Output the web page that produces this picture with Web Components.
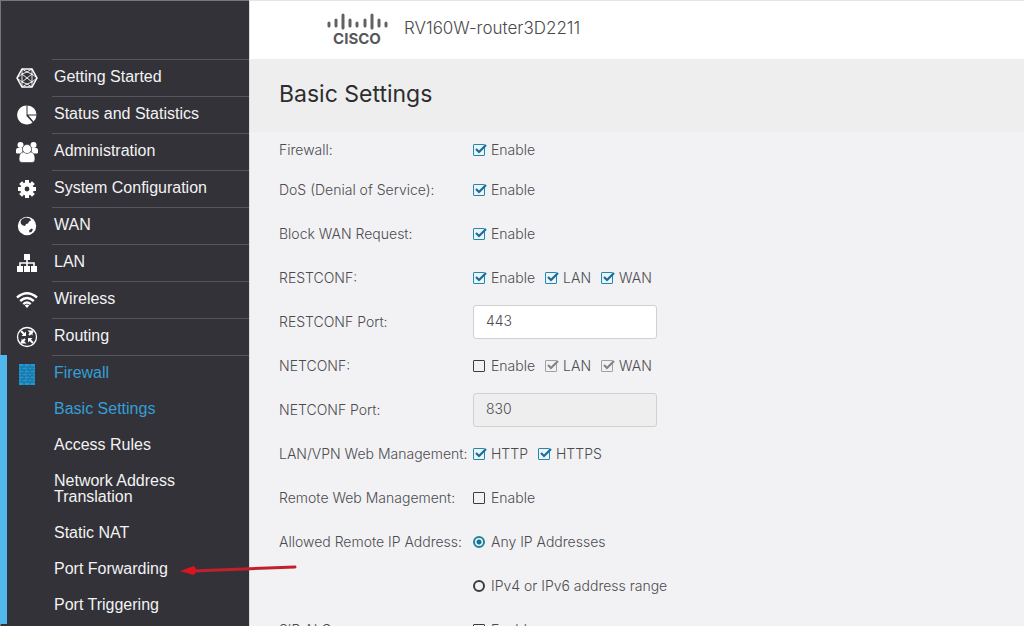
<!DOCTYPE html>
<html lang="en">
<head>
<meta charset="utf-8">
<meta name="viewport" content="width=device-width, initial-scale=1">
<title>RV160W-router3D2211 - Basic Settings</title>
<style>
  html, body { margin: 0; height: 100%; }
  body { font-family: Inter, "Liberation Sans", sans-serif; overflow: hidden; }
</style>
</head>
<body>
<router-app>
  <side-nav slot="nav">
    <nav-item icon="start">Getting Started</nav-item>
    <nav-item icon="pie">Status and Statistics</nav-item>
    <nav-item icon="users">Administration</nav-item>
    <nav-item icon="gear">System Configuration</nav-item>
    <nav-item icon="globe">WAN</nav-item>
    <nav-item icon="lan">LAN</nav-item>
    <nav-item icon="wifi">Wireless</nav-item>
    <nav-item icon="routing">Routing</nav-item>
    <nav-item icon="wall" active>Firewall
      <sub-item slot="sub" active>Basic Settings</sub-item>
      <sub-item slot="sub">Access Rules</sub-item>
      <sub-item slot="sub">Network Address Translation</sub-item>
      <sub-item slot="sub">Static NAT</sub-item>
      <sub-item slot="sub" pointed>Port Forwarding</sub-item>
      <sub-item slot="sub">Port Triggering</sub-item>
    </nav-item>
  </side-nav>
  <brand-bar slot="header">RV160W-router3D2211</brand-bar>
  <settings-page>
    <span slot="title">Basic Settings</span>
    <setting-row label="Firewall:" compact><check-field checked>Enable</check-field></setting-row>
    <setting-row label="DoS (Denial of Service):"><check-field checked>Enable</check-field></setting-row>
    <setting-row label="Block WAN Request:"><check-field checked>Enable</check-field></setting-row>
    <setting-row label="RESTCONF:"><check-field checked>Enable</check-field><check-field checked>LAN</check-field><check-field checked>WAN</check-field></setting-row>
    <port-row label="RESTCONF Port:" value="443"></port-row>
    <setting-row label="NETCONF:"><check-field>Enable</check-field><check-field checked disabled>LAN</check-field><check-field checked disabled>WAN</check-field></setting-row>
    <port-row label="NETCONF Port:" value="830" disabled></port-row>
    <setting-row label="LAN/VPN Web Management:"><check-field checked>HTTP</check-field><check-field checked>HTTPS</check-field></setting-row>
    <setting-row label="Remote Web Management:"><check-field>Enable</check-field></setting-row>
    <choice-row label="Allowed Remote IP Address:" options="Any IP Addresses|IPv4 or IPv6 address range"></choice-row>
    <setting-row label="SIP ALG:"><check-field>Enable</check-field></setting-row>
  </settings-page>
</router-app>

<script>
class Base extends HTMLElement {
  connectedCallback() {
    if (this.shadowRoot) return;
    this.attachShadow({ mode: 'open' }).innerHTML = this.render();
  }
}

const ROW = `
  :host { display: block; }
  .row { display: grid; grid-template-columns: 194px minmax(0, 1fr); min-height: 44px; align-items: center;
         font-size: 14px; line-height: 20px; font-weight: 300; color: #4c4c50; }
  .name { white-space: nowrap; }
`;

const ICONS = {
  start: `<g fill="none" stroke="#fff"><path stroke-width="1.5" d="M6 2h10l5 9-5 9H6l-5-9z"/><path stroke-width=".9" d="M6 2l5 3 5-3M1 11l5-4M21 11l-5-4M1 11l5 4M21 11l-5 4M6 20l5-3 5 3M6 20v-5M16 20v-5M6 2v5M16 2v5M6 7l5-2 5 2v8l-5 2-5-2zM6 7l10 8M16 7L6 15"/></g>`,
  pie: `<path fill="#fff" d="M10.500 1.500V12l6 6.500A9.500 9.500 0 1 1 10.500 1.500z"/><path fill="#fff" d="M11.500 1.500a9 9 0 0 1 9 9h-9zM12.500 11.500h8a9 9 0 0 1-3 6z"/>`,
  users: `<g fill="#fff"><circle cx="4.500" cy="4" r="3"/><circle cx="17.500" cy="4" r="3"/><path d="M0 12V9q0-2 2-2h4.500v5.500H1zM22 12V9q0-2-2-2h-4.500v5.500H21z"/><path stroke="#333238" stroke-width=".6" d="M3 18q0-6 4-7h8q4 1 4 7 0 3.500-3 3.500H6Q3 21.500 3 18z"/><circle cx="11" cy="8" r="4.500" stroke="#333238" stroke-width=".6"/></g>`,
  gear: `<g fill="none" stroke="#fff"><circle cx="11" cy="11" r="4.600" stroke-width="4.400"/><path stroke-width="4" d="M11 2v3M11 17v3M2 11h3M17 11h3M4.600 4.600l2 2M15.400 15.400l2 2M17.400 4.600l-2 2M6.600 15.400l-2 2"/></g>`,
  globe: `<circle cx="11" cy="11" r="9.200" fill="#fff"/><path fill="#333238" d="M6 4l4-1.500 4 1 1 2-2 1-1 2-2 .5-1 2-2-.5L5 9 4.500 6.500zM13 15.500l2.500-2 1.500 1-1.500 2.500-2 .5z"/>`,
  lan: `<path fill="#fff" d="M8 2h6v6H8zM1 14h6v6H1zM8 14h6v6H8zM15 14h6v6h-6z"/><path fill="none" stroke="#fff" stroke-width="1.600" d="M11 7v8M4 15v-4h14v4"/>`,
  wifi: `<g fill="none" stroke="#fff" stroke-width="2.400"><path d="M1 8.500q10-8.500 20 0M4.200 12q6.800-6 13.600 0M7.300 15.200q3.700-3.200 7.400 0"/></g><path fill="#fff" d="M8.800 16.500q2.200-1.800 4.400 0L11 19z"/>`,
  routing: `<circle cx="11" cy="11" r="9.500" fill="none" stroke="#fff" stroke-width="1.300"/><g stroke="#fff" stroke-width="1.900"><path d="M5 5l4 4M17 5l-4 4M5 17l4-4M17 17l-4-4"/></g><path fill="#fff" d="M10 10H5.500L10 5.500zM16.500 4.500v5l-5-5zM12 12h4.500L12 16.500zM5.500 17.500v-5l5 5z"/>`,
  wall: `<path fill="#1a9bd7" d="M3 1h16v21H3z"/><path fill="none" stroke="#28516b" stroke-width=".6" d="M3 4h16M3 7h16M3 10h16M3 13h16M3 16h16M3 19h16M8 1v3M14 1v3M6 4v3M12 4v3M16 4v3M8 7v3M14 7v3M6 10v3M12 10v3M16 10v3M8 13v3M14 13v3M6 16v3M12 16v3M16 16v3M8 19v3M14 19v3"/>`
};

customElements.define('router-app', class extends Base {
  render() {
    return `<style>
      :host { display: grid; grid-template-columns: 250px minmax(0, 1fr); height: 100vh; overflow: hidden; background: #f2f2f4; }
      aside { position: relative; z-index: 1; background: #333238; border-right: 1px solid #dcdcde; }
      main { min-width: 0; overflow: hidden; }
    </style>
    <aside><slot name="nav"></slot></aside>
    <main><slot name="header"></slot><slot></slot></main>`;
  }
});

customElements.define('side-nav', class extends Base {
  render() {
    return `<style>
      :host { display: block; box-sizing: border-box; min-height: 100%; padding-top: 58px; border-top: 1px solid #77767b;
              box-shadow: inset 1px 0 #77767b; font-family: "Liberation Sans", Arial, sans-serif; }
    </style><nav aria-label="Main"><slot></slot></nav>`;
  }
});

customElements.define('nav-item', class extends Base {
  render() {
    return `<style>
      :host { display: block; color: #f2f2f4; }
      :host([active]) { color: #359fd6; box-shadow: inset 7px 0 #50b8ec; }
      a { display: grid; grid-template-columns: 22px minmax(0, 1fr); column-gap: 14px; align-items: center;
          padding-left: 16px; color: inherit; text-decoration: none; font-size: 16px; line-height: 34px; }
      svg { display: block; width: 22px; height: 22px; }
      span { border-top: 1px solid #56555b; padding: 0 0 2px 2px; white-space: nowrap; }
    </style>
    <a href="#"><svg viewBox="0 0 22 22" aria-hidden="true">${ICONS[this.getAttribute('icon')]}</svg><span><slot></slot></span></a>
    <slot name="sub"></slot>`;
  }
});

customElements.define('sub-item', class extends Base {
  render() {
    const arrow = this.hasAttribute('pointed')
      ? `<svg viewBox="0 0 118 14" aria-hidden="true"><path d="M14 9L116 5" stroke="#c4202c" stroke-width="3" stroke-linecap="round"/><path d="M1 9l14-5q4 4 0 9z" fill="#dc1420"/></svg>` : '';
    return `<style>
      :host { display: block; position: relative; color: #f2f2f4; }
      :host([active]) { color: #359fd6; }
      a { display: block; padding: 9px 60px 11px 54px; color: inherit; text-decoration: none; font-size: 16px; line-height: 16px; }
      svg { position: absolute; left: 179px; top: 10px; width: 118px; height: 14px; }
    </style><a href="#"><slot></slot></a>${arrow}`;
  }
});

customElements.define('brand-bar', class extends Base {
  render() {
    const bars = [[3, 23, 26], [10, 20, 26], [17, 15, 28], [24, 20, 26], [31, 23, 26], [39, 20, 26], [46, 15, 28], [53, 20, 26], [60, 23, 26]]
      .map(([x, a, b]) => `M${x} ${a - 12}V${b - 12}`).join('');
    return `<style>
      :host { display: flex; align-items: flex-start; gap: 15px; box-sizing: border-box; height: 59px; padding: 11px 0 0 76px;
              background: #fff; border-top: 1px solid #e4e4e4; color: #4a4a4c; }
      svg { display: block; width: 63px; height: 36px; }
      .device { font-size: 17px; line-height: 32px; font-weight: 300; }
      text { font-size: 15px; font-weight: 700; }
    </style>
    <svg viewBox="0 0 63 36" role="img" aria-label="Cisco"><path d="${bars}" stroke="#626265" stroke-width="3" stroke-linecap="round"/>
      <text x="31" y="32" text-anchor="middle" fill="#58585b">CISCO</text></svg>
    <span class="device"><slot></slot></span>`;
  }
});

customElements.define('settings-page', class extends Base {
  render() {
    return `<style>
      :host { display: block; }
      h1 { margin: 0; padding: 20px 29px 23px; background: #eee; color: #2d2d30; font-size: 23px; line-height: 30px; font-weight: 400; }
      form { padding: 0 29px; }
    </style><h1><slot name="title"></slot></h1><form><slot></slot></form>`;
  }
});

customElements.define('setting-row', class extends Base {
  render() {
    return `<style>${ROW}
      :host([compact]) .row { min-height: 36px; }
      .fields { display: flex; gap: 10px; }
    </style>
    <div class="row" role="group" aria-labelledby="name"><span class="name" id="name">${this.getAttribute('label')}</span><div class="fields"><slot></slot></div></div>`;
  }
});

customElements.define('check-field', class extends Base {
  render() {
    const has = n => this.hasAttribute(n);
    return `<style>
      :host { display: block; }
      label { display: grid; grid-template-columns: 13px auto; column-gap: 5px; align-items: center; }
      .box { position: relative; height: 12px; }
      input { appearance: none; display: block; box-sizing: border-box; width: 12px; height: 12px; margin: 0; border: 1px solid #3c3c40; border-radius: 1px; }
      input:checked { border-color: #1e8ab4; }
      svg { display: none; position: absolute; left: 0; top: -1px; width: 15px; height: 13px; color: #176f9c; pointer-events: none; }
      input:checked + svg { display: block; }
      input:disabled { border-color: #a0a0a3; }
      input:disabled + svg { color: #858588; }
    </style>
    <label><span class="box"><input type="checkbox" ${has('checked') ? 'checked' : ''} ${has('disabled') ? 'disabled' : ''}><svg viewBox="0 0 15 13" aria-hidden="true"><path d="M3 6l3 3 7-7" fill="none" stroke="currentColor" stroke-width="2.200"/></svg></span><span><slot></slot></span></label>`;
  }
});

customElements.define('port-row', class extends Base {
  render() {
    return `<style>${ROW}
      input { display: block; box-sizing: border-box; width: 184px; height: 34px; padding: 0 12px 3px; border: 1px solid #d0d0d3; border-radius: 3px;
              background: #fff; color: #4c4c50; font: inherit; }
      input:disabled { background: #eee; }
    </style>
    <div class="row"><label class="name" for="port">${this.getAttribute('label')}</label><div><input id="port" type="text" inputmode="numeric" value="${this.getAttribute('value')}" ${this.hasAttribute('disabled') ? 'disabled' : ''}></div></div>`;
  }
});

customElements.define('choice-row', class extends Base {
  render() {
    const items = this.getAttribute('options').split('|').map((t, i) =>
      `<label><input type="radio" name="choice" ${i ? '' : 'checked'}><span>${t}</span></label>`).join('');
    return `<style>${ROW}
      .name, label { line-height: 44px; }
      .row { align-items: start; }
      label { display: grid; grid-template-columns: 13px auto; justify-content: start; column-gap: 5px; align-items: center; }
      input { appearance: none; box-sizing: border-box; width: 12px; height: 12px; margin: 0; border: 2px solid #3c3c40; border-radius: 50%; }
      input:checked { border-color: #1d8597; background: radial-gradient(circle, #176f9c 2px, transparent 3px); }
    </style>
    <div class="row" role="radiogroup" aria-labelledby="name"><span class="name" id="name">${this.getAttribute('label')}</span><div>${items}</div></div>`;
  }
});
</script>
</body>
</html>
